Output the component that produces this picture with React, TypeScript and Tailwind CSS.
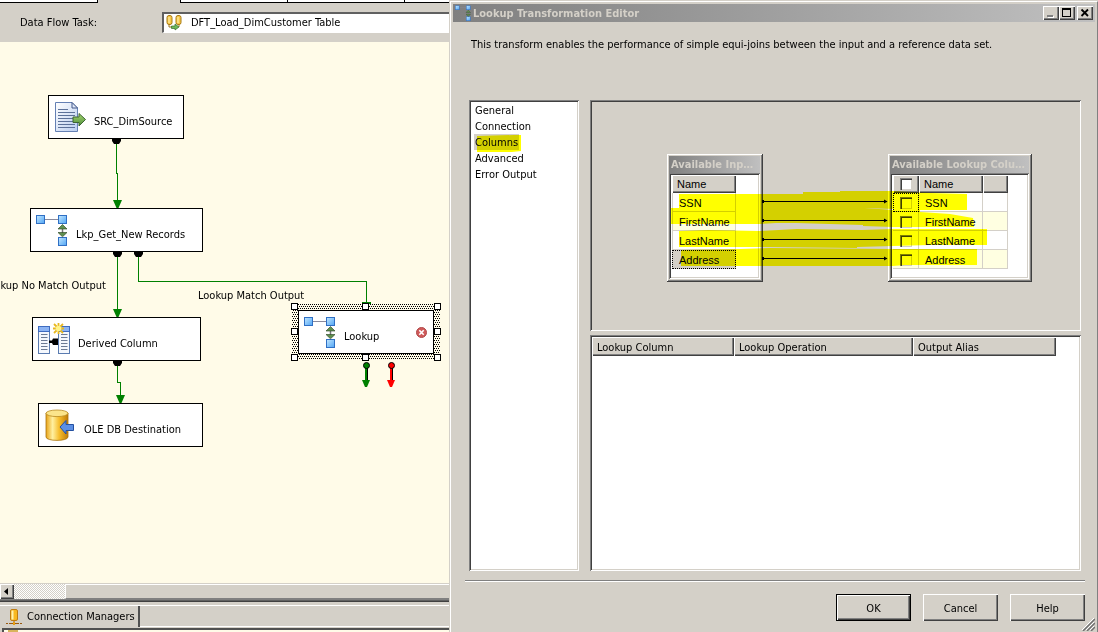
import type { ReactNode } from "react";

const raised = "bg-[#d4d0c8] shadow-[inset_1px_1px_#fff,inset_-1px_-1px_#404040,inset_-2px_-2px_#808080]";
const sunken =
  "p-[2px] shadow-[inset_1px_1px_#808080,inset_-1px_-1px_#fff,inset_2px_2px_#404040,inset_-2px_-2px_#d4d0c8]";

function LookupIcon({ className = "size-8" }: { className?: string }) {
  return (
    <svg viewBox="0 0 32 32" className={className + " shrink-0"} aria-hidden="true">
      <defs>
        <linearGradient id="sq" x1="0" y1="0" x2="1" y2="1">
          <stop offset="0" stopColor="#c4e8ff" />
          <stop offset="1" stopColor="#4fa4f4" />
        </linearGradient>
      </defs>
      <path d="M9 5.500H23" stroke="#8a8a9c" />
      <rect x=".5" y="1.500" width="8" height="8" fill="url(#sq)" stroke="#2f6fc4" />
      <rect x="22.500" y="1.500" width="8" height="8" fill="url(#sq)" stroke="#2f6fc4" />
      <rect x="22.500" y="23.500" width="8" height="8" fill="url(#sq)" stroke="#2f6fc4" />
      <path d="M26.500 13V21" stroke="#777" strokeWidth="1.500" />
      <path d="M26.500 10.500L31 15H22Z" fill="#5f8f4f" stroke="#27401f" strokeWidth=".6" />
      <path d="M26.500 22.800L31 18.500H22Z" fill="#5f8f4f" stroke="#27401f" strokeWidth=".6" />
    </svg>
  );
}

function SourceIcon() {
  return (
    <svg viewBox="0 0 32 32" className="size-8 shrink-0" aria-hidden="true">
      <defs>
        <linearGradient id="page" x1="0" y1="0" x2="1" y2="1">
          <stop offset="0" stopColor="#fff" />
          <stop offset="1" stopColor="#b9cdf0" />
        </linearGradient>
        <linearGradient id="garrow" x1="0" y1="0" x2="0" y2="1">
          <stop offset="0" stopColor="#a6d86f" />
          <stop offset="1" stopColor="#4d8c3a" />
        </linearGradient>
      </defs>
      <path d="M1.500 1.500H18L23.500 7V30.500H1.500Z" fill="url(#page)" stroke="#6480b4" />
      <path d="M18 1.500V7H23.500Z" fill="#dfe8f8" stroke="#44598a" />
      <path d="M4 8.500H14M4 11.500H21M4 14.500H21M4 17.500H21M4 20.500H21M4 23.500H21M4 26.500H21" stroke="#5c7199" />
      <path d="M19 16H25V12.500L31.500 18.500L25 25V21.500H19Z" fill="url(#garrow)" stroke="#3c6531" />
    </svg>
  );
}

function DerivedIcon() {
  return (
    <svg viewBox="0 0 32 32" className="size-8 shrink-0" aria-hidden="true">
      {[0.5, 20.5].map((x) => (
        <g key={x}>
          <rect x={x} y="3.500" width="11" height="27" fill="#f5f8fd" stroke="#5a7bb0" />
          <rect x={x} y="3.500" width="11" height="5" fill="#8cb4f4" stroke="#3f6cc0" />
          <path
            d={`M${x + 2.5} 11.500h6.500m-6.500 3h6.500m-6.500 3h6.500m-6.500 3h6.500m-6.500 3h6.500m-6.500 3h6.500`}
            stroke="#6b7a94"
          />
        </g>
      ))}
      <path d="M11 17.500H14L15 15.500H20V22H15L14 20H11Z" fill="#000" />
      <path d="M20.500 0V11M15 5.500H26M16 1L25 10M25 1L16 10" stroke="#e8b820" strokeWidth="1.800" />
      <circle cx="20.500" cy="5.500" r="2.800" fill="#fff48a" />
    </svg>
  );
}

function DestinationIcon() {
  return (
    <svg viewBox="0 0 32 32" className="size-8 shrink-0" aria-hidden="true">
      <defs>
        <linearGradient id="cyl">
          <stop offset="0" stopColor="#e8a317" />
          <stop offset=".3" stopColor="#fff0a0" />
          <stop offset=".6" stopColor="#f6bd2c" />
          <stop offset="1" stopColor="#c07c08" />
        </linearGradient>
      </defs>
      <path d="M2 4V28C2 32.500 24 32.500 24 28V4Z" fill="url(#cyl)" stroke="#a87412" strokeWidth=".8" />
      <ellipse cx="13" cy="4.300" rx="11" ry="3.300" fill="#fbe58b" stroke="#b98a20" strokeWidth=".8" />
      <path d="M16 18L22 11.500V15.500H29.500V21.500H22V25Z" fill="#5b8fe4" stroke="#2450a0" />
    </svg>
  );
}

function TaskIcon() {
  return (
    <svg viewBox="0 0 16 16" className="size-4 shrink-0" aria-hidden="true">
      <path d="M3 8V12H8M13 8V12" fill="none" stroke="#9a7420" />
      <rect x="1" y=".5" width="5" height="9" rx="2" fill="#f7c948" stroke="#a87a14" />
      <rect x="10" y=".5" width="5" height="9" rx="2" fill="#f7c948" stroke="#a87a14" />
      <path d="M3 2V8M12 2V8" stroke="#fff3b8" />
      <path d="M5.500 11H9V9L13 12L9 15V13.500H5.500Z" fill="#6fb85a" stroke="#33702a" strokeWidth=".7" />
    </svg>
  );
}

function ConnectionIcon() {
  return (
    <svg viewBox="0 0 16 16" className="size-4 shrink-0" aria-hidden="true">
      <path d="M8 11V14M0 14.500H2M3 14.500H13M14 14.500H16" stroke="#9a5a10" />
      <rect x="4.500" y=".5" width="7" height="11" rx="1.500" fill="#f8b820" stroke="#c07c10" />
      <path d="M6.500 1.500V10.500" stroke="#fff2b0" strokeWidth="2" />
      <rect x="7" y="13" width="2" height="3" fill="#e8a010" />
    </svg>
  );
}

function Node({ place, label, icon, children }: { place: string; label: string; icon: ReactNode; children?: ReactNode }) {
  return (
    <div className={"absolute flex h-11 items-center gap-2 border border-black bg-white pl-[5px] whitespace-nowrap " + place}>
      {icon}
      <span className="pt-[10px]">{label}</span>
      {children}
    </div>
  );
}

function Canvas() {
  return (
    <main className="relative min-h-0 flex-1 overflow-hidden bg-[#fffbe8]">
      <svg className="absolute top-0 left-0 h-[400px] w-[450px]" viewBox="0 42 450 400" aria-hidden="true">
        <g fill="none" stroke="#008000" shapeRendering="crispEdges">
          <path d="M116.500 139V173.500H117.500V203" />
          <path d="M117.500 252V312" />
          <path d="M138.500 252V281.500H366.500V303" />
          <path d="M117.500 361V382.500H120.500V398" />
        </g>
        <g fill="#008000">
          <path d="M113 200H122L118.500 208H116.500Z" />
          <path d="M113 309H122L118.500 317H116.500Z" />
          <path d="M116 395H125L121.500 403H119.500Z" />
          <path d="M362 302H371V304H362Z" />
        </g>
        <g fill="#000">
          <path d="M112 139H121V141L119 144H114L112 141Z" />
          <path d="M113 252H122V254L120 257H115L113 254Z" />
          <path d="M134 252H143V254L141 257H136L134 254Z" />
          <path d="M113 361H122V363L120 366H115L113 363Z" />
        </g>
        {[
          { x: 366, c: "#008000" },
          { x: 391, c: "#ff0000" },
        ].map((o) => (
          <g key={o.x}>
            <path d={`M${o.x + 1.5} 368V381`} stroke="#000" />
            <path d={`M${o.x} 368V381`} stroke={o.c} strokeWidth="2" />
            <path d={`M${o.x - 4} 380H${o.x + 4}L${o.x + 1} 387H${o.x - 1}Z`} fill={o.c} />
            <circle cx={o.x + 0.5} cy="365.500" r="3" fill={o.c} stroke="#000" />
          </g>
        ))}
      </svg>

      <Node place="top-[53px] left-[48px] w-[136px]" label="SRC_DimSource" icon={<SourceIcon />} />
      <Node place="top-[166px] left-[30px] w-[173px]" label="Lkp_Get_New Records" icon={<LookupIcon />} />
      <Node place="top-[275px] left-[32px] w-[169px]" label="Derived Column" icon={<DerivedIcon />} />
      <Node place="top-[361px] left-[38px] w-[165px]" label="OLE DB Destination" icon={<DestinationIcon />} />
      <span className="absolute top-[237px] left-[-17px] whitespace-nowrap">Lookup No Match Output</span>
      <span className="absolute top-[247px] left-[198px] whitespace-nowrap">Lookup Match Output</span>

      <svg className="absolute top-[262px] left-[292px] h-[56px] w-[148px]" shapeRendering="crispEdges" aria-hidden="true">
        <defs>
          <pattern id="dots" width="2" height="4" patternUnits="userSpaceOnUse">
            <rect width="1" height="1" />
            <rect x="1" y="2" width="1" height="1" />
          </pattern>
        </defs>
        <rect width="148" height="56" fill="url(#dots)" />
      </svg>
      <Node place="top-[268px] left-[298px] w-[136px]" label="Lookup" icon={<LookupIcon />}>
        <svg viewBox="0 0 11 11" className="mr-[6px] ml-auto size-[11px]" aria-label="Error">
          <circle cx="5.500" cy="5.500" r="5" fill="#cf5a5a" stroke="#b04848" />
          <path d="M3.300 3.300L7.700 7.700M7.700 3.300L3.300 7.700" stroke="#fff" strokeWidth="1.600" />
        </svg>
      </Node>
      <svg className="absolute top-[261px] left-[291px] h-[58px] w-[150px]" viewBox="0 0 150 58" aria-hidden="true">
        <g fill="#fff" stroke="#000">
          {[0.5, 71.5, 143.5].map((x) =>
            [0.5, 25.5, 51.5].map((y) =>
              x === 71.5 && y === 25.5 ? null : <rect key={`${x}-${y}`} x={x} y={y} width="6" height="6" />,
            ),
          )}
        </g>
      </svg>
    </main>
  );
}

function Designer() {
  return (
    <section className="flex w-[450px] shrink-0 flex-col overflow-hidden border-r border-[#d4d0c8] bg-[#d4d0c8]">
      <div className="flex h-[3px] shrink-0">
        <div className="w-[98px] border-r border-b border-black bg-white" />
        <div className="w-[82px]" />
        <div className="w-[108px] border-x border-b border-black bg-white" />
        <div className="w-[117px] border-r border-b border-black bg-white" />
        <div className="flex-1 border-b border-black bg-white" />
      </div>
      <div className="flex h-[39px] shrink-0 items-center pl-5">
        <label htmlFor="task" className="w-[142px]">
          Data Flow Task:
        </label>
        <div className="flex h-[21px] flex-1 items-center border-t-2 border-b border-l-2 border-t-[#606060] border-b-white border-l-[#606060] bg-white pl-[2px]">
          <TaskIcon />
          <select id="task" className="h-4 flex-1 appearance-none bg-white pl-[9px] outline-none">
            <option>DFT_Load_DimCustomer Table</option>
          </select>
        </div>
      </div>
      <Canvas />
      <div className="flex h-[16px] shrink-0 border-t border-[#d4d0c8]">
        <button aria-label="Scroll left" className={"flex w-[14px] items-center justify-center pr-[2px] " + raised}>
          <svg viewBox="0 0 4 7" className="h-[7px] w-1" aria-hidden="true">
            <path d="M4 0V7L0 3.500Z" />
          </svg>
        </button>
        <div className="w-[51px] bg-[repeating-conic-gradient(#fff_0_25%,#d4d0c8_0_50%)] bg-[length:2px_2px]" />
        <div className="flex-1 border-t border-b border-l border-t-white border-b-[#808080] border-l-white" />
      </div>
      <div className="h-[3px] shrink-0 border-t border-b border-t-[#808080] border-b-[#404040] bg-[#606060]" />
      <div className="mt-[3px] flex h-[22px] shrink-0 border-t border-white">
        <button className="flex w-[140px] items-center gap-[5px] border-r-2 border-[#505050] pl-[6px] whitespace-nowrap">
          <ConnectionIcon />
          Connection Managers
        </button>
        <div className="flex-1 border-b border-white" />
      </div>
      <div className="mt-px ml-[2px] h-[4px] shrink-0 border-t-2 border-l-2 border-[#505050] bg-[#fffbe8] pl-1">
        <div className="h-[2px] w-[10px] bg-[#d9b45c]" />
      </div>
    </section>
  );
}

const fields = ["SSN", "FirstName", "LastName", "Address"];

function FloatingWindow({ place, title, children }: { place: string; title: string; children: ReactNode }) {
  return (
    <div
      className={
        "absolute flex h-[129px] flex-col bg-[#d4d0c8] p-[3px] shadow-[inset_1px_1px_#d4d0c8,inset_-1px_-1px_#404040,inset_2px_2px_#fff,inset_-2px_-2px_#808080] " +
        place
      }
    >
      <div className="h-[17px] shrink-0 truncate bg-linear-to-r from-[#808080] to-[#c0c0c0] pl-[2px] leading-[18px] font-bold text-[#d4d0c8]">
        {title}
      </div>
      <div className={"min-h-0 flex-1 bg-white " + sunken}>{children}</div>
    </div>
  );
}

const headCell = "h-[18px] p-0 text-left font-normal " + raised;
const focused = " outline outline-dotted -outline-offset-1 outline-black";

function InputColumns() {
  return (
    <table className="ml-px w-[64px] table-fixed border-separate border-spacing-0 font-['Liberation_Sans',sans-serif] whitespace-nowrap">
      <thead>
        <tr>
          <th className={headCell + " pl-[5px]"}>Name</th>
        </tr>
      </thead>
      <tbody>
        {fields.map((f) => (
          <tr key={f} className="even:bg-[#ffffe1]">
            <td
              className={
                "h-[19px] border-r border-b border-l border-[#d4d0c8] p-0 pt-px pl-[6px]" +
                (f === "Address" ? " bg-[#d4d0c8]" + focused : "")
              }
            >
              {f}
            </td>
          </tr>
        ))}
      </tbody>
    </table>
  );
}

const box =
  "block size-3 appearance-none shadow-[inset_1px_1px_#808080,inset_2px_2px_#404040,inset_-1px_-1px_#d4d0c8] bg-white";

function LookupColumns() {
  return (
    <table className="ml-px w-[115px] table-fixed border-separate border-spacing-0 font-['Liberation_Sans',sans-serif] whitespace-nowrap">
      <colgroup>
        <col className="w-[26px]" />
        <col className="w-[64px]" />
        <col className="w-[25px]" />
      </colgroup>
      <thead>
        <tr>
          <th className={headCell + " pl-[7px]"}>
            <input type="checkbox" aria-label="Select all columns" className={box} />
          </th>
          <th className={headCell + " pl-[5px]"}>Name</th>
          <th className={headCell} />
        </tr>
      </thead>
      <tbody>
        {fields.map((f) => (
          <tr key={f} className="even:bg-[#ffffe1]">
            <td className={"h-[19px] border-r border-b border-[#d4d0c8] p-0 pt-px pl-[7px]" + (f === "SSN" ? focused : "")}>
              <input type="checkbox" id={"col-" + f} className={box} />
            </td>
            <td className="border-r border-b border-[#d4d0c8] p-0 pt-px pl-[6px]">
              <label htmlFor={"col-" + f}>{f}</label>
            </td>
            <td className="border-r border-b border-[#d4d0c8] p-0" />
          </tr>
        ))}
      </tbody>
    </table>
  );
}

function Mapping() {
  return (
    <div className={"relative h-[231px] shrink-0 overflow-hidden bg-[#d4d0c8] " + sunken}>
      <FloatingWindow place="top-[53px] left-[76px] w-[97px]" title="Available Input Columns">
        <InputColumns />
      </FloatingWindow>
      <FloatingWindow place="top-[53px] left-[297px] w-[145px]" title="Available Lookup Columns">
        <LookupColumns />
      </FloatingWindow>
      <svg className="absolute top-0 left-0 h-[231px] w-[491px]" viewBox="590 100 491 231" aria-hidden="true">
        {[201.5, 220.5, 239.5, 258.5].map((y) => (
          <g key={y}>
            <path d={`M763 ${y}H887`} stroke="#000" shapeRendering="crispEdges" />
            <rect x="762" y={y - 1.5} width="2" height="3" />
            <path d={`M884 ${y - 2}L887.500 ${y}L884 ${y + 2}Z`} />
          </g>
        ))}
      </svg>
      <svg
        className="pointer-events-none absolute top-0 left-0 h-[231px] w-[491px] mix-blend-multiply"
        viewBox="590 100 491 231"
        aria-hidden="true"
      >
        <g fill="#ff0">
          <path d="M679 194H803V192H840V191H893L930 193L967 194V210H893V209L865 208H679Z" />
          <path d="M671 208H865L893 210H920V212L950 214L973 218L974 227H893L863 226V225L796 223H776L760 224H671Z" />
          <path d="M679 231L708 230L760 231L797 229L862 230L893 229H987V245H930L893 246L857 247V248L770 247H679Z" />
          <path d="M681 250L740 249L770 248L893 249H977V265H905L893 266H681Z" />
        </g>
      </svg>
    </div>
  );
}

function LookupGrid() {
  const th = "h-[19px] p-0 pt-[2px] pl-[5px] text-left font-normal " + raised;
  return (
    <div className={"min-h-0 flex-1 bg-white " + sunken}>
      <table className="w-[464px] table-fixed border-separate border-spacing-0">
        <colgroup>
          <col className="w-[142px]" />
          <col className="w-[179px]" />
          <col className="w-[143px]" />
        </colgroup>
        <thead>
          <tr>
            <th className={th}>Lookup Column</th>
            <th className={th}>Lookup Operation</th>
            <th className={th}>Output Alias</th>
          </tr>
        </thead>
      </table>
    </div>
  );
}

function Dialog() {
  const cap = "flex h-[14px] w-4 items-center justify-center " + raised;
  const action = "h-[27px] w-[75px] pt-[2px] " + raised;
  return (
    <div role="dialog" aria-labelledby="dlg" className="flex min-w-0 flex-1 flex-col bg-[#d4d0c8] pt-px">
      <div className="flex min-h-0 flex-1 flex-col border-t border-r border-l border-t-white border-r-[#808080] border-l-white px-[2px] pt-[2px]">
        <header className="flex h-[18px] shrink-0 items-center bg-linear-to-r from-[#808080] to-[#c0c0c0] pr-[2px] pl-[2px]">
          <LookupIcon className="size-4" />
          <h1 id="dlg" className="ml-[2px] flex-1 pt-[2px] font-bold text-[#d4d0c8]">
            Lookup Transformation Editor
          </h1>
          <button aria-label="Minimize" className={cap}>
            <svg viewBox="0 0 16 14" className="h-[14px] w-4" aria-hidden="true">
              <path d="M5 10H11V12H5Z" fill="#fff" />
              <path d="M4 9H10V11H4Z" fill="#808080" />
            </svg>
          </button>
          <button aria-label="Maximize" className={cap}>
            <svg viewBox="0 0 16 14" className="h-[14px] w-4" aria-hidden="true">
              <path d="M3 2H12V11H3ZM4 4V10H11V4Z" fillRule="evenodd" />
            </svg>
          </button>
          <button aria-label="Close" className={cap + " ml-[2px]"}>
            <svg viewBox="0 0 16 14" className="h-[14px] w-4" aria-hidden="true">
              <path d="M4.500 3.500L11 10M11 3.500L4.500 10" stroke="#000" strokeWidth="1.800" />
            </svg>
          </button>
        </header>

        <p className="h-[78px] shrink-0 pt-4 pl-[18px] whitespace-nowrap">
          This transform enables the performance of simple equi-joins between the input and a reference data set.
        </p>

        <div className="flex min-h-0 flex-1 gap-[11px] pr-[14px] pl-4">
          <nav className={"w-[110px] shrink-0 bg-white " + sunken}>
            <ul className="pl-[3px]">
              {["General", "Connection", "Columns", "Advanced", "Error Output"].map((t) => (
                <li key={t} className="flex h-4">
                  <button
                    className={"relative px-px pt-[2px] leading-[14px] whitespace-nowrap " + (t === "Columns" ? "bg-[#d4d0c8]" : "")}
                  >
                    {t}
                    {t === "Columns" && (
                      <svg
                        className="pointer-events-none absolute top-0 left-[2px] h-[19px] w-[46px] mix-blend-multiply"
                        viewBox="0 0 46 19"
                        aria-hidden="true"
                      >
                        <path d="M1 2L38 1H45V17L36 18H1Z" fill="#ff0" />
                      </svg>
                    )}
                  </button>
                </li>
              ))}
            </ul>
          </nav>
          <div className="flex min-w-0 flex-1 flex-col gap-1">
            <Mapping />
            <LookupGrid />
          </div>
        </div>

        <footer className="relative mt-[9px] mr-[10px] ml-3 h-[52px] shrink-0 border-t border-[#808080]">
          <div className="flex justify-end gap-3 border-t border-white pt-3">
            <button className={"border border-black " + action}>OK</button>
            <button className={action}>Cancel</button>
            <button className={action}>Help</button>
          </div>
          <svg viewBox="0 0 13 13" className="absolute right-[-10px] bottom-px size-[13px]" aria-hidden="true">
            <path d="M0 12L12 0M4 12L12 4M8 12L12 8" stroke="#fff" />
            <path d="M1 13L13 1M5 13L13 5M9 13L13 9" stroke="#707070" strokeWidth="1.500" />
          </svg>
        </footer>
      </div>
    </div>
  );
}

export default function App() {
  return (
    <div className="flex h-screen min-h-[632px] overflow-hidden bg-[#d4d0c8] font-['DejaVu_Sans_Condensed','DejaVu_Sans',sans-serif] text-[11px] leading-[14px] text-black">
      <Designer />
      <Dialog />
    </div>
  );
}
